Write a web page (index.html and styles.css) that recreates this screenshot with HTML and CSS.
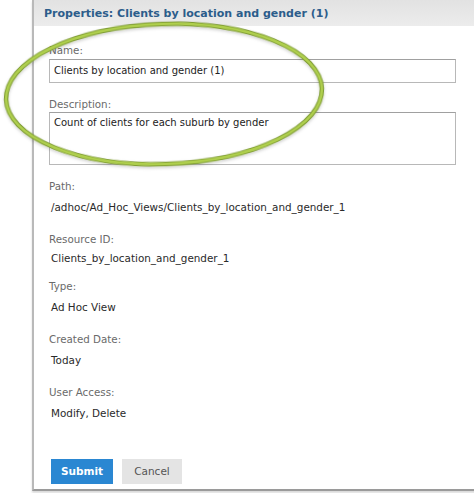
FILE: index.html
```html
<!DOCTYPE html>
<html>
<head>
<meta charset="utf-8">
<link rel="stylesheet" href="styles.css">
</head>
<body>
<div class="page">
  <div class="panel">
    <div class="header">Properties: Clients by location and gender (1)</div>
    <div class="body">
      <div class="label">Name:</div>
      <div class="input">Clients by location and gender (1)</div>
      <div class="label gap-a">Description:</div>
      <div class="textarea">Count of clients for each suburb by gender</div>
      <div class="label gap-a">Path:</div>
      <div class="value">/adhoc/Ad_Hoc_Views/Clients_by_location_and_gender_1</div>
      <div class="label gap-b">Resource ID:</div>
      <div class="value tight">Clients_by_location_and_gender_1</div>
      <div class="label gap-a">Type:</div>
      <div class="value">Ad Hoc View</div>
      <div class="label gap-b">Created Date:</div>
      <div class="value">Today</div>
      <div class="label gap-b">User Access:</div>
      <div class="value">Modify, Delete</div>
      <div class="buttons">
        <div class="btn submit">Submit</div>
        <div class="btn cancel">Cancel</div>
      </div>
    </div>
  </div>
  <svg class="ring" width="474" height="200" viewBox="0 0 474 200">
    <defs>
      <filter id="sh" x="-10%" y="-10%" width="120%" height="130%">
        <feDropShadow dx="0" dy="1.5" stdDeviation="1.5" flood-color="#000" flood-opacity="0.2"/>
      </filter>
    </defs>
    <g transform="rotate(-2 164 94)" filter="url(#sh)">
      <ellipse cx="164" cy="94" rx="158" ry="70" fill="none" stroke="#7d9a32" stroke-width="4.5"/>
      <ellipse cx="164" cy="94" rx="158" ry="70" fill="none" stroke="#afcf4e" stroke-width="2.5"/>
    </g>
  </svg>
</div>
</body>
</html>
```

FILE: styles.css
```css
html, body {
  margin: 0;
  padding: 0;
  background: #ffffff;
}
.page {
  position: relative;
  width: 474px;
  height: 493px;
  overflow: hidden;
}
.panel {
  margin-left: 32px;
  width: 460px;
  border-left: 2px solid #b9b9b9;
  border-bottom: 2px solid #9a9a9a;
  box-shadow: 0 2px 2px rgba(0,0,0,0.15);
  font-family: "DejaVu Sans", Verdana, sans-serif;
}
.header {
  height: 26px;
  line-height: 28px;
  padding-left: 10px;
  background: linear-gradient(#e2e2e2, #ececec);
  color: #2c5d8b;
  font-size: 11px;
  font-weight: bold;
}
.body {
  padding: 17px 0 5px 15px;
  display: flex;
  flex-direction: column;
  align-items: flex-start;
}
.label {
  font-size: 10.3px;
  line-height: 14px;
  color: #6a6a6a;
}
.gap-a { margin-top: 14px; }
.gap-b { margin-top: 18px; }
.input, .textarea {
  box-sizing: border-box;
  width: 407px;
  margin-top: 2px;
  border: 1px solid #b8b8b8;
  border-top-color: #a0a0a0;
  background: #fff;
  font-size: 10px;
  color: #222;
  padding-left: 4px;
}
.input {
  height: 24px;
  line-height: 22px;
}
.textarea {
  height: 53px;
  margin-top: 1px;
  line-height: 14px;
  padding-top: 3px;
}
.value {
  margin-top: 7px;
  margin-left: 2px;
  font-size: 10.4px;
  line-height: 14px;
  color: #2a2a2a;
}
.value.tight { margin-top: 5px; }
.buttons {
  margin-top: 39px;
  margin-left: 2px;
  display: flex;
  gap: 9px;
}
.btn {
  height: 25px;
  line-height: 25px;
  text-align: center;
  font-size: 10.5px;
  font-weight: bold;
}
.submit {
  width: 62px;
  background: #2a87d2;
  color: #ffffff;
}
.cancel {
  width: 60px;
  background: #e4e4e4;
  color: #555555;
  font-weight: normal;
}
.ring {
  position: absolute;
  left: 0;
  top: 0;
  pointer-events: none;
}
```
